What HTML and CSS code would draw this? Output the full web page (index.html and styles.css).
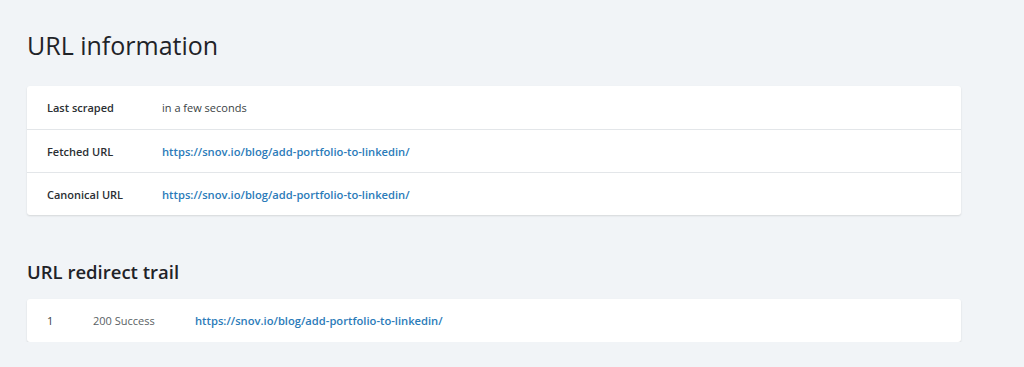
FILE: index.html
```html
<!DOCTYPE html>
<html lang="en">
<head>
    <meta charset="UTF-8">
    <meta name="viewport" content="width=device-width, initial-scale=1.0">
    <title>URL information</title>
    <link rel="stylesheet" href="styles.css">
</head>
<body>
    <div class="page">
        <h1 class="page-title">URL information</h1>

        <div class="card">
            <div class="info-row">
                <div class="info-label">Last scraped</div>
                <div class="info-value">in a few seconds</div>
            </div>
            <div class="info-row">
                <div class="info-label">Fetched URL</div>
                <a class="info-link" href="https://snov.io/blog/add-portfolio-to-linkedin/">https://snov.io/blog/add-portfolio-to-linkedin/</a>
            </div>
            <div class="info-row">
                <div class="info-label">Canonical URL</div>
                <a class="info-link" href="https://snov.io/blog/add-portfolio-to-linkedin/">https://snov.io/blog/add-portfolio-to-linkedin/</a>
            </div>
        </div>

        <h2 class="section-title">URL redirect trail</h2>

        <div class="card">
            <div class="trail-row">
                <div class="trail-num">1</div>
                <div class="trail-status">200 Success</div>
                <a class="info-link" href="https://snov.io/blog/add-portfolio-to-linkedin/">https://snov.io/blog/add-portfolio-to-linkedin/</a>
            </div>
        </div>
    </div>
</body>
</html>
```

FILE: styles.css
```css
* {
    margin: 0;
    padding: 0;
    box-sizing: border-box;
}

body {
    font-family: "Open Sans", "Noto Sans", sans-serif;
    background: #f1f4f7;
    color: #1d2129;
}

.page {
    width: 934px;
    margin-left: 27px;
    padding-top: 28px;
}

.page-title {
    font-size: 25px;
    font-weight: 400;
    line-height: 34px;
    color: #1f2328;
    margin-bottom: 24px;
}

.card {
    background: #fff;
    border-radius: 3px;
    box-shadow: 0 1px 2px rgba(0, 0, 0, 0.12);
}

.info-row {
    display: flex;
    align-items: center;
    height: 43px;
    padding-left: 20px;
    border-top: 1px solid #e3e6e9;
    font-size: 11px;
}

.info-row:first-child {
    border-top: none;
}

.info-label {
    width: 115px;
    font-weight: 600;
    color: #2b2f33;
}

.info-value {
    color: #3a3f44;
}

.info-link {
    color: #2b7bb9;
    font-size: 11.2px;
    font-weight: 600;
    text-decoration: none;
}

.section-title {
    font-size: 18.5px;
    font-weight: 600;
    line-height: 26px;
    color: #1f2328;
    margin-top: 44px;
    margin-bottom: 14px;
}

.trail-row {
    display: flex;
    align-items: center;
    height: 43px;
    padding-left: 20px;
    font-size: 11px;
}

.trail-num {
    width: 46px;
    color: #3a3f44;
}

.trail-status {
    width: 102px;
    color: #5a5f64;
}
```
